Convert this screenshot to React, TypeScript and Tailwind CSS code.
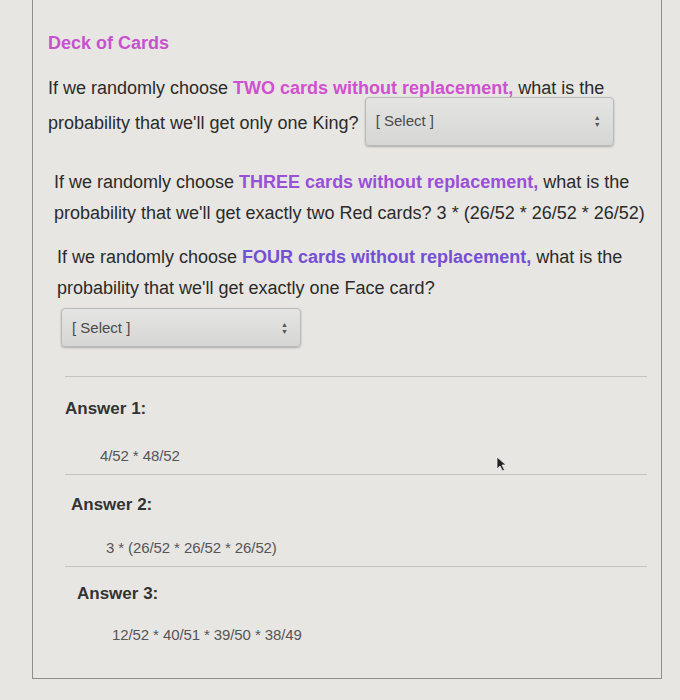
const FONT = { fontFamily: "'Liberation Sans', Arial, sans-serif" } as const;

function SelectBox({ className }: { className: string }) {
  return (
    <span
      className={`inline-flex items-center justify-between rounded-[4px] border border-[#b9b9b7] bg-gradient-to-b from-[#e4e4e2] to-[#d6d6d4] shadow-[0_1px_2px_rgba(0,0,0,0.25)] pl-[10px] pr-[12px] align-middle ${className}`}
    >
      <span className="text-[15px] leading-[20px] text-[#4a4a4a]">[ Select ]</span>
      <span className="flex flex-col items-center text-[7px] leading-[7px] text-[#555]">
        <span>▲</span>
        <span>▼</span>
      </span>
    </span>
  );
}

const answers = [
  { label: "Answer 1:", value: "4/52 * 48/52", pt: "pt-[20px]", mt: "mt-[25px]" },
  { label: "Answer 2:", value: "3 * (26/52 * 26/52 * 26/52)", pt: "pt-[18px]", mt: "mt-[21px]" },
  { label: "Answer 3:", value: "12/52 * 40/51 * 39/50 * 38/49", pt: "pt-[15px]", mt: "mt-[19px]" },
];

export default function App() {
  return (
    <div className="relative min-h-[700px] bg-[#e7e6e3] pl-[32px] pr-[18px]" style={FONT}>
      <div className="h-[679px] border-x border-b border-[#8e8e8c]">
        {/* Questions */}
        <div className="pl-[15px] pr-[4px] pt-[31px] text-[18px] leading-[31px] text-[#2b2b2b] whitespace-nowrap">
          <h2 className="font-bold text-[#c653cc] leading-[24px]">Deck of Cards</h2>

          <p className="mt-[16px] leading-[35px]">
            If we randomly choose <b className="text-[#d050cf]">TWO cards without replacement,</b> what is the
            <br />
            probability that we'll get only one King?{" "}
            <SelectBox className="relative -top-[3px] -my-[8px] ml-[1px] h-[49px] w-[249px]" />
          </p>

          <p className="mt-[26px] pl-[6px]">
            If we randomly choose <b className="text-[#9a4fd9]">THREE cards without replacement,</b> what is the
            <br />
            probability that we'll get exactly two Red cards? 3 * (26/52 * 26/52 * 26/52)
          </p>

          <p className="mt-[13px] pl-[9px]">
            If we randomly choose <b className="text-[#744fd3]">FOUR cards without replacement,</b> what is the
            <br />
            probability that we'll get exactly one Face card?
          </p>

          <div className="mt-[4px] pl-[13px]">
            <SelectBox className="h-[39px] w-[240px]" />
          </div>
        </div>

        {/* Answers */}
        <div className="mt-[29px] ml-[32px] mr-[14px]">
          {answers.map((a, i) => (
            <div
              key={a.label}
              className={`border-t border-[#c3c3c0] pb-[8px] ${a.pt}`}
              style={{ paddingLeft: i * 6 }}
            >
              <div className="text-[17px] font-bold text-[#333] leading-[24px]">{a.label}</div>
              <div className={`${a.mt} pl-[35px] text-[15px] leading-[20px] text-[#555] tracking-[-0.1px]`}>{a.value}</div>
            </div>
          ))}
        </div>
      </div>

      {/* mouse cursor */}
      <svg className="absolute left-[496px] top-[456px]" width="12" height="16" viewBox="0 0 12 16">
        <path d="M1 1 L1 13 L4 10 L6.5 15 L8.5 14 L6 9 L10 9 Z" fill="#222" stroke="#eee" strokeWidth="0.8" />
      </svg>
    </div>
  );
}
